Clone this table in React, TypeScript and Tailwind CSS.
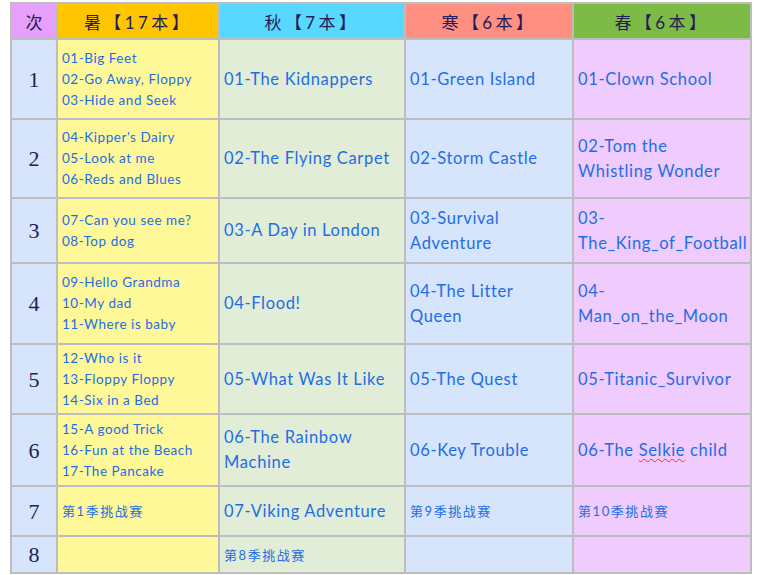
import React from 'react';

type Cell = { lines: string[]; small?: boolean; cn?: boolean };

const rows: { n: string; h: string; cells: Cell[] }[] = [
  {
    n: '1',
    h: 'h-[80px]',
    cells: [
      { lines: ['01-Big Feet', '02-Go Away, Floppy', '03-Hide and Seek'], small: true },
      { lines: ['01-The Kidnappers'] },
      { lines: ['01-Green Island'] },
      { lines: ['01-Clown School'] },
    ],
  },
  {
    n: '2',
    h: 'h-[79px]',
    cells: [
      { lines: ["04-Kipper's Dairy", '05-Look at me', '06-Reds and Blues'], small: true },
      { lines: ['02-The Flying Carpet'] },
      { lines: ['02-Storm Castle'] },
      { lines: ['02-Tom the', 'Whistling Wonder'] },
    ],
  },
  {
    n: '3',
    h: 'h-[65px]',
    cells: [
      { lines: ['07-Can you see me?', '08-Top dog'], small: true },
      { lines: ['03-A Day in London'] },
      { lines: ['03-Survival', 'Adventure'] },
      { lines: ['03-', 'The_King_of_Football'] },
    ],
  },
  {
    n: '4',
    h: 'h-[81px]',
    cells: [
      { lines: ['09-Hello Grandma', '10-My dad', '11-Where is baby'], small: true },
      { lines: ['04-Flood!'] },
      { lines: ['04-The Litter', 'Queen'] },
      { lines: ['04-', 'Man_on_the_Moon'] },
    ],
  },
  {
    n: '5',
    h: 'h-[70px]',
    cells: [
      { lines: ['12-Who is it', '13-Floppy Floppy', '14-Six in a Bed'], small: true },
      { lines: ['05-What Was It Like'] },
      { lines: ['05-The Quest'] },
      { lines: ['05-Titanic_Survivor'] },
    ],
  },
  {
    n: '6',
    h: 'h-[72px]',
    cells: [
      { lines: ['15-A good Trick', '16-Fun at the Beach', '17-The Pancake'], small: true },
      { lines: ['06-The Rainbow', 'Machine'] },
      { lines: ['06-Key Trouble'] },
      { lines: ['06-The Selkie child'] },
    ],
  },
  {
    n: '7',
    h: 'h-[50px]',
    cells: [
      { lines: ['第1季挑战赛'], cn: true },
      { lines: ['07-Viking Adventure'] },
      { lines: ['第9季挑战赛'], cn: true },
      { lines: ['第10季挑战赛'], cn: true },
    ],
  },
  {
    n: '8',
    h: 'h-[37px]',
    cells: [
      { lines: [] },
      { lines: ['第8季挑战赛'], cn: true },
      { lines: [] },
      { lines: [] },
    ],
  },
];

const bodyBg = ['bg-[#fff899]', 'bg-[#e1edd6]', 'bg-[#d6e4fc]', 'bg-[#f0cbfd]'];

const renderLine = (line: string) => {
  if (line === '06-The Selkie child') {
    return (
      <>
        06-The{' '}
        <span className="underline decoration-wavy decoration-red-500 decoration-1 underline-offset-2">
          Selkie
        </span>{' '}
        child
      </>
    );
  }
  return line;
};

const App = () => {
  return (
    <div className="bg-white w-[759px] h-[575px] pt-[2px] pl-[10px]">
      <table
        className="table-fixed border-collapse w-[740px] text-[#1d6ee6]"
        style={{ fontFamily: 'Lato, "Noto Sans CJK SC", sans-serif' }}
      >
        <colgroup>
          <col className="w-[46px]" />
          <col className="w-[162px]" />
          <col className="w-[186px]" />
          <col className="w-[168px]" />
          <col className="w-[178px]" />
        </colgroup>
        <thead>
          <tr className="h-[36px] text-[17px] text-[#241c57]">
            <th className="border-2 border-[#bdbdbd] bg-[#e69ffa] font-normal pt-[3px]">次</th>
            <th className="border-2 border-[#bdbdbd] bg-[#ffc600] font-normal tracking-[0.2em] pt-[3px]">暑【17本】</th>
            <th className="border-2 border-[#bdbdbd] bg-[#58d7ff] font-normal tracking-[0.2em] pt-[3px]">秋【7本】</th>
            <th className="border-2 border-[#bdbdbd] bg-[#ff8f81] font-normal tracking-[0.2em] pt-[3px]">寒【6本】</th>
            <th className="border-2 border-[#bdbdbd] bg-[#7cbb45] font-normal tracking-[0.2em] pt-[3px]">春【6本】</th>
          </tr>
        </thead>
        <tbody>
          {rows.map((row) => (
            <tr key={row.n} className={row.h}>
              <td
                className="border-2 border-[#bdbdbd] bg-[#d6e4fc] text-center text-[22px] text-[#221d55]"
                style={{ fontFamily: '"Liberation Serif", serif' }}
              >
                {row.n}
              </td>
              {row.cells.map((cell, i) => (
                <td
                  key={i}
                  className={`border-2 border-[#bdbdbd] ${bodyBg[i]} px-[4px] align-middle ${
                    cell.small
                      ? 'text-[13.5px] leading-[21px] tracking-[0.04em]'
                      : cell.cn
                      ? 'text-[13px] leading-[20px] tracking-[0.12em]'
                      : 'text-[16.5px] leading-[25px] tracking-[0.04em]'
                  }`}
                >
                  {cell.lines.map((line, j) => (
                    <div key={j} className="whitespace-nowrap">
                      {renderLine(line)}
                    </div>
                  ))}
                </td>
              ))}
            </tr>
          ))}
        </tbody>
      </table>
    </div>
  );
};

export default App;
